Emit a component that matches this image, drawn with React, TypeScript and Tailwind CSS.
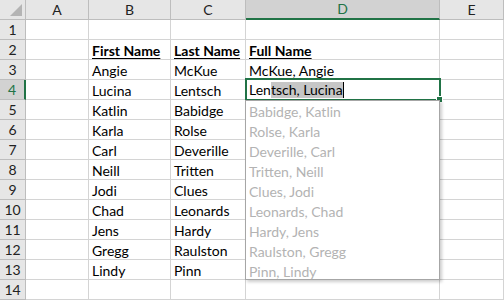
import React from "react";

const cols = ["A", "B", "C", "D", "E"];
const widths = ["w-[63px]", "w-[82px]", "w-[75px]", "w-[194px]", "w-[64px]"];

const rows: string[][] = [
  ["", "", "", "", ""],
  ["", "First Name", "Last Name", "Full Name", ""],
  ["", "Angie", "McKue", "McKue, Angie", ""],
  ["", "Lucina", "Lentsch", "", ""],
  ["", "Katlin", "Babidge", "", ""],
  ["", "Karla", "Rolse", "", ""],
  ["", "Carl", "Deverille", "", ""],
  ["", "Neill", "Tritten", "", ""],
  ["", "Jodi", "Clues", "", ""],
  ["", "Chad", "Leonards", "", ""],
  ["", "Jens", "Hardy", "", ""],
  ["", "Gregg", "Raulston", "", ""],
  ["", "Lindy", "Pinn", "", ""],
  ["", "", "", "", ""],
];

const suggestions = [
  "Babidge, Katlin",
  "Rolse, Karla",
  "Deverille, Carl",
  "Tritten, Neill",
  "Clues, Jodi",
  "Leonards, Chad",
  "Hardy, Jens",
  "Raulston, Gregg",
  "Pinn, Lindy",
];

export default function App() {
  return (
    <div className="relative w-[504px] h-[300px] overflow-hidden bg-white text-[14px] leading-[16px] text-black" style={{ fontFamily: "Lato, 'Open Sans', sans-serif" }}>
      {/* column headers */}
      <div className="flex h-[20px]">
        <div className="relative w-[26px] h-[20px] bg-[#e6e6e6] border-r border-b border-[#bdbdbd]">
          <div className="absolute right-[3px] bottom-[3px] w-0 h-0 border-l-[12px] border-l-transparent border-b-[12px] border-b-[#b4b4b4]" />
        </div>
        {cols.map((c, i) =>
          c === "D" ? (
            <div key={c} className={`${widths[i]} h-[20px] bg-[#d2d2d2] border-r border-[#bdbdbd] border-b-2 border-b-[#217346] flex items-center justify-center text-[#217346]`}>
              {c}
            </div>
          ) : (
            <div key={c} className={`${widths[i]} h-[20px] bg-[#e6e6e6] border-r border-b border-[#bdbdbd] flex items-center justify-center text-[#222]`}>
              {c}
            </div>
          )
        )}
      </div>
      {rows.map((r, ri) => (
        <div key={ri} className="flex h-[20px]">
          {ri === 3 ? (
            <div className="w-[26px] h-[20px] bg-[#d2d2d2] border-b border-[#bdbdbd] border-r-2 border-r-[#217346] flex items-center justify-center text-[#217346]">
              {ri + 1}
            </div>
          ) : (
            <div className="w-[26px] h-[20px] bg-[#e6e6e6] border-r border-b border-[#bdbdbd] flex items-center justify-center text-[#222]">
              {ri + 1}
            </div>
          )}
          {r.map((v, ci) => (
            <div key={ci} className={`${widths[ci]} h-[20px] border-r border-b border-[#d4d4d4] flex items-end pl-[3px] whitespace-nowrap`}>
              {ri === 1 ? <span className="font-bold underline underline-offset-2">{v}</span> : v}
            </div>
          ))}
        </div>
      ))}

      {/* active cell with autocomplete */}
      <div className="absolute left-[245px] top-[78px] w-[196px] h-[23px] border-2 border-[#217346] bg-white flex items-end pl-[2px] pb-[1px]">
        <span>Len</span>
        <span className="bg-[#c6c6c6]">tsch, Lucina</span>
        <span className="w-px h-[16px] bg-black" />
      </div>
      <div className="absolute left-[436px] top-[96px] w-[7px] h-[7px] bg-[#217346] border border-white" />

      {/* autocomplete list */}
      <div className="absolute left-[245px] top-[100px] w-[195px] h-[180px] bg-white border border-[#a6a6a6] shadow-[2px_2px_3px_rgba(0,0,0,0.2)] flex flex-col">
        {suggestions.map((s) => (
          <div key={s} className="h-[20px] shrink-0 flex items-end pl-[3px] pb-[1px] text-[#b3b3b3]">
            {s}
          </div>
        ))}
      </div>
    </div>
  );
}
